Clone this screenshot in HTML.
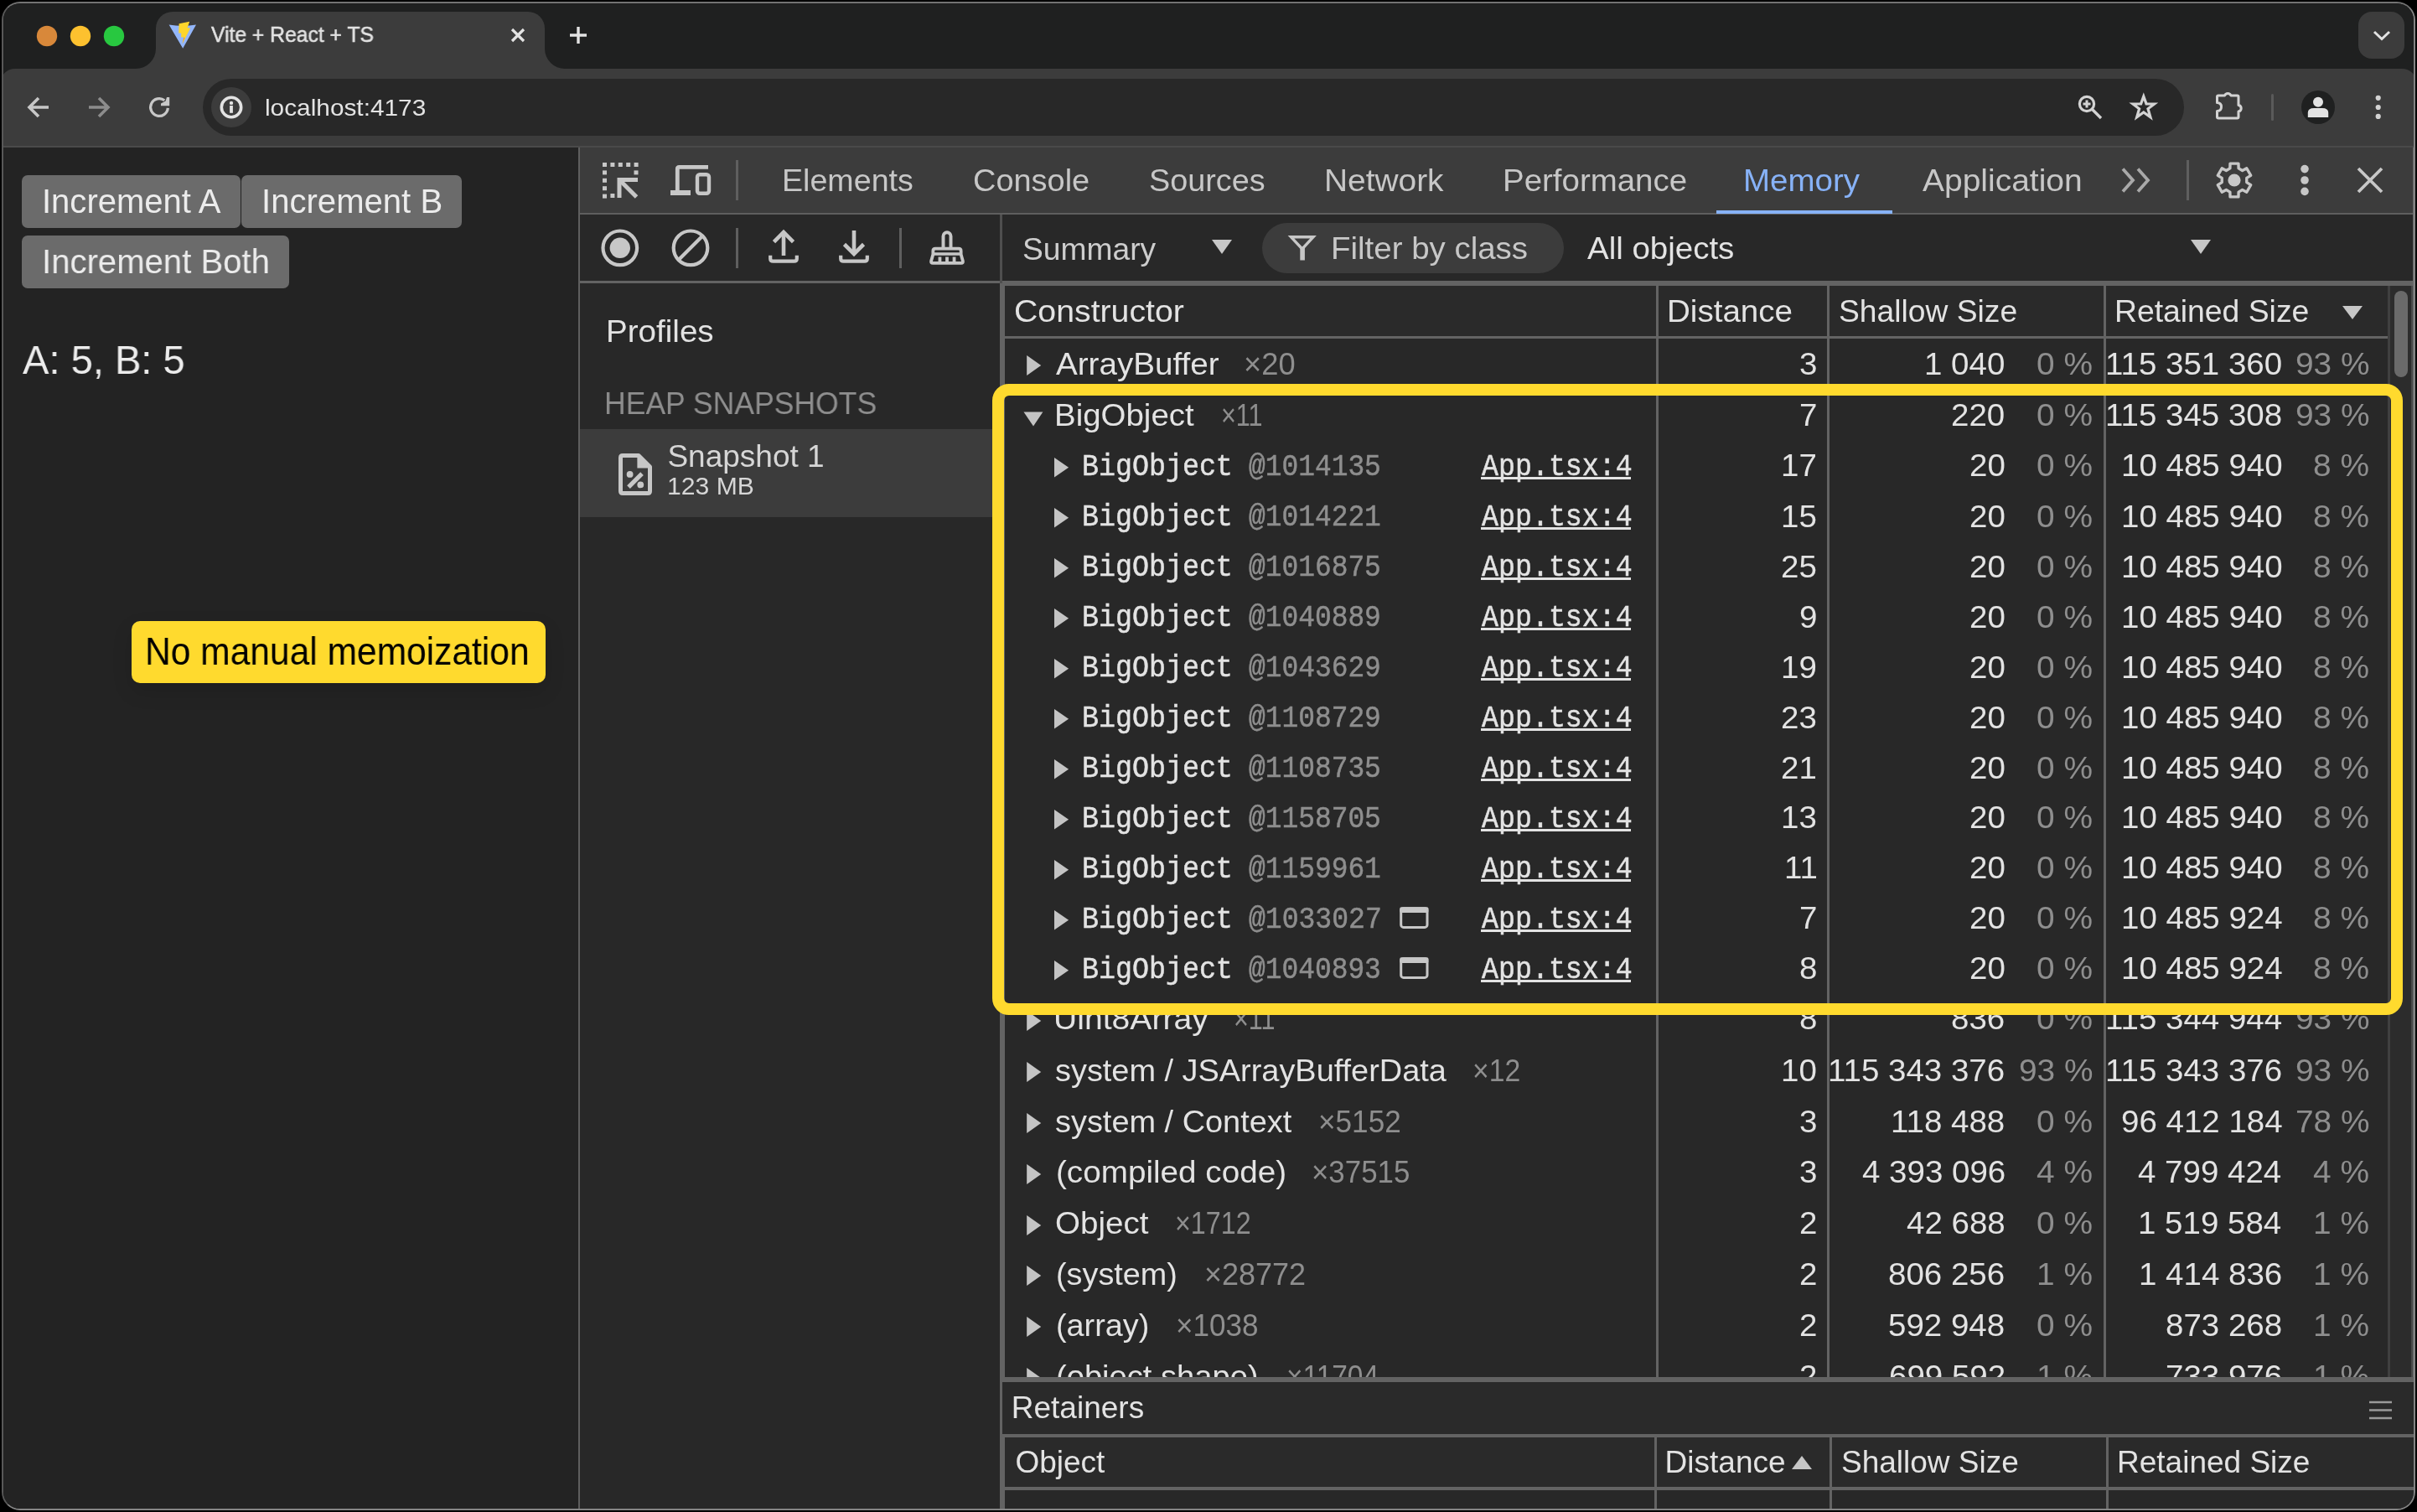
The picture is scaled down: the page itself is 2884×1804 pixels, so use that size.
<!DOCTYPE html>
<html><head><meta charset="utf-8"><title>DevTools Memory</title>
<style>
html,body{margin:0;padding:0;width:2884px;height:1804px;overflow:hidden;background:#000;}
#win{position:absolute;left:0;top:0;width:2884px;height:1804px;}
#win div,#win svg{position:absolute;}
</style></head><body><div id="win">
<div style="left:2px;top:2px;width:2880px;height:1800px;box-sizing:border-box;border:2px solid #585858;border-top-color:#727272;border-right-color:#838383;border-bottom-color:#858585;border-radius:22px;background:#1f2020"></div>
<div id="clip" style="left:0;top:0;width:2884px;height:1804px;clip-path:inset(4px round 20px);will-change:transform;">
<div style="left:0px;top:0px;width:2884px;height:82px;background:#1f2020;"></div>
<div style="left:186px;top:14px;width:464px;height:80px;background:#3c3c3c;border-radius:20px 20px 0 0"></div>
<svg class="i" style="left:162px;top:58px" width="24" height="24"><path d="M0 24 A24 24 0 0 0 24 0 V24 Z" fill="#3c3c3c"/></svg>
<svg class="i" style="left:650px;top:58px" width="24" height="24"><path d="M24 24 A24 24 0 0 1 0 0 V24 Z" fill="#3c3c3c"/></svg>
<div style="left:2814px;top:14px;width:55px;height:56px;background:#3c3c3c;border-radius:16px"></div>
<div style="left:0px;top:82px;width:2884px;height:92px;background:#3c3c3c;border-radius:18px 18px 0 0"></div>
<div style="left:0px;top:174px;width:2884px;height:2px;background:#4a4a4a;"></div>
<div style="left:242px;top:94px;width:2364px;height:68px;background:#282828;border-radius:34px"></div>
<div style="left:252px;top:104px;width:48px;height:48px;background:#3c3c3c;border-radius:24px"></div>
<div style="left:2746px;top:108px;width:40px;height:40px;background:#1f2020;border-radius:20px"></div>
<div style="left:2710px;top:112px;width:3px;height:32px;background:#5a5a5a;border-radius:2px"></div>
<svg style="left:40px;top:27px;" width="120" height="32" viewBox="0 0 120 32"><circle cx="16" cy="16" r="12.2" fill="#d8883a"/><circle cx="56" cy="16" r="12.2" fill="#fdc12f"/><circle cx="96" cy="16" r="12.2" fill="#28c840"/></svg>
<svg style="left:200px;top:24px;" width="36" height="36" viewBox="0 0 36 36"><path d="M1.6 5.6 Q18 8.2 34 5.6 L18.2 33.8 Z" fill="#93b6fa"/><path d="M13.6 4.2 L26.2 1.8 L23.6 9.2 L27.2 9.6 L17.6 28.2 L19.3 20.4 L16.2 20.4 L16.2 15.4 L13.2 15.4 Z" fill="#fed62b"/><path d="M19.3 20.4 L17.6 28.2 L20.5 21 Z" fill="#f28c1c" opacity="0.8"/></svg>
<svg style="left:608px;top:32px;" width="20" height="20" viewBox="0 0 20 20"><path d="M3 3 L17 17 M17 3 L3 17" stroke="#e3e3e3" stroke-width="3.2" stroke-linecap="butt"/></svg>
<svg style="left:678px;top:30px;" width="24" height="24" viewBox="0 0 24 24"><path d="M12 2 V22 M2 12 H22" stroke="#e3e3e3" stroke-width="3.4"/></svg>
<svg style="left:2829px;top:34px;" width="26" height="16" viewBox="0 0 26 16"><path d="M4 4 L13 12.5 L22 4" stroke="#e3e3e3" stroke-width="3" fill="none"/></svg>
<svg style="left:30px;top:112px;" width="32" height="32" viewBox="0 0 32 32"><path d="M28 16 H6 M16 5 L5 16 L16 27" stroke="#c7c7c7" stroke-width="3.6" fill="none"/></svg>
<svg style="left:102px;top:112px;" width="32" height="32" viewBox="0 0 32 32"><path d="M4 16 H26 M16 5 L27 16 L16 27" stroke="#8c8c8c" stroke-width="3.6" fill="none"/></svg>
<svg style="left:174px;top:112px;" width="32" height="32" viewBox="0 0 32 32"><path d="M26.31 16.9 A10.35 10.35 0 1 1 22.3 7.8" stroke="#c7c7c7" stroke-width="3.3" fill="none"/><path d="M25 4 H28.2 V14.2 H18 V11.4 L23.6 8.6 Z" fill="#c7c7c7"/></svg>
<svg style="left:260px;top:112px;" width="32" height="32" viewBox="0 0 32 32"><circle cx="16" cy="16" r="11.7" stroke="#e3e3e3" stroke-width="3.6" fill="none"/><circle cx="16" cy="10.9" r="2.2" fill="#e3e3e3"/><rect x="14.1" y="14" width="3.8" height="8.8" fill="#e3e3e3"/></svg>
<svg style="left:2476px;top:110px;" width="36" height="36" viewBox="0 0 36 36"><circle cx="14" cy="14" r="8.6" stroke="#d3d3d3" stroke-width="3.2" fill="none"/><path d="M14 9.5 V18.5 M9.5 14 H18.5" stroke="#d3d3d3" stroke-width="3"/><path d="M20.5 20.5 L31 31" stroke="#d3d3d3" stroke-width="3.4"/></svg>
<svg style="left:2540px;top:109px;" width="36" height="36" viewBox="0 0 36 36"><path d="M17.8 6 L21 14.9 L30.6 15 L23 20.8 L25.9 30.7 L17.8 24.9 L9.7 30.7 L12.6 20.8 L5 15 L14.6 14.9 Z" stroke="#d3d3d3" stroke-width="3.2" fill="none" stroke-linejoin="miter"/></svg>
<svg style="left:2640px;top:106px;" width="40" height="40" viewBox="0 0 40 40"><path d="M7 8 Q5.5 8 5.5 9.5 V16.5 Q10.5 16.5 10.5 21.5 Q10.5 26.5 5.5 26.5 V33.5 Q5.5 35 7 35 H29.5 Q31 35 31 33.5 V27 A3.8 3.8 0 0 0 31 19.5 V9.5 Q31 8 29.5 8 H22 A4 4 0 0 0 14.5 8 Z" stroke="#d3d3d3" stroke-width="3" fill="none" stroke-linejoin="round"/></svg>
<svg style="left:2746px;top:108px;" width="40" height="40" viewBox="0 0 40 40"><circle cx="20" cy="13.8" r="6" fill="#e3e3e3"/><path d="M7.8 32 V26.5 Q7.8 21 15 21 H25 Q32.2 21 32.2 26.5 V32 Z" fill="#e3e3e3"/></svg>
<svg style="left:2830px;top:110px;" width="16" height="36" viewBox="0 0 16 36"><circle cx="7.7" cy="6.8" r="3.1" fill="#d3d3d3"/><circle cx="7.7" cy="18" r="3.1" fill="#d3d3d3"/><circle cx="7.7" cy="28.9" r="3.1" fill="#d3d3d3"/></svg>
<div style="left:0px;top:176px;width:690px;height:1628px;background:#232323;"></div>
<div style="left:26px;top:209px;width:261px;height:63px;background:#6b6b6b;border-radius:7px"></div>
<div style="left:288px;top:209px;width:263px;height:63px;background:#6b6b6b;border-radius:7px"></div>
<div style="left:26px;top:281px;width:319px;height:63px;background:#6b6b6b;border-radius:7px"></div>
<div style="left:157px;top:741px;width:494px;height:74px;background:#ffda2e;border-radius:10px;box-shadow:0 10px 24px rgba(0,0,0,0.12)"></div>
<div style="left:690px;top:176px;width:2px;height:1628px;background:#5e5e5e;"></div>
<div style="left:692px;top:176px;width:2192px;height:79px;background:#3c3c3c;"></div>
<div style="left:692px;top:254px;width:2192px;height:2px;background:#5e5e5e;"></div>
<div style="left:2048px;top:251px;width:210px;height:4px;background:#87b2f7;"></div>
<div style="left:692px;top:256px;width:2192px;height:79px;background:#282828;"></div>
<div style="left:692px;top:335px;width:2192px;height:3px;background:#636363;"></div>
<div style="left:692px;top:338px;width:501px;height:1466px;background:#282828;"></div>
<div style="left:692px;top:512px;width:501px;height:105px;background:#3c3c3c;"></div>
<div style="left:1193px;top:256px;width:3px;height:82px;background:#4f4f4f;"></div>
<div style="left:1193px;top:338px;width:6px;height:1466px;background:#636363;"></div>
<div style="left:1199px;top:341px;width:1681px;height:60px;background:#2a2a2a;"></div>
<div style="left:1199px;top:338px;width:1681px;height:3px;background:#636363;"></div>
<div style="left:1199px;top:401px;width:1681px;height:3px;background:#636363;"></div>
<div style="left:1199px;top:404px;width:1681px;height:1239px;background:#282828;"></div>
<div style="left:1976px;top:341px;width:3px;height:1302px;background:#636363;"></div>
<div style="left:2180px;top:341px;width:3px;height:1302px;background:#636363;"></div>
<div style="left:2510px;top:341px;width:3px;height:1302px;background:#636363;"></div>
<div style="left:2851px;top:341px;width:29px;height:1302px;background:#2c2c2c;"></div>
<div style="left:2849px;top:341px;width:3px;height:1302px;background:#404040;"></div>
<div style="left:2877px;top:341px;width:2px;height:1302px;background:#4a4a4a;"></div>
<div style="left:2879px;top:176px;width:2px;height:1628px;background:#6c6c6c;"></div>
<div style="left:2857px;top:347px;width:16px;height:103px;background:#6a6a6a;border-radius:8px"></div>
<div style="left:1259.90px;top:415.55px;font-family:'Liberation Sans', sans-serif;font-size:37px;line-height:37px;white-space:pre;color:#e3e3e3;transform:scaleX(1.0435);transform-origin:0 0;">ArrayBuffer</div>
<div style="left:1484.16px;top:415.55px;font-family:'Liberation Sans', sans-serif;font-size:37px;line-height:37px;white-space:pre;color:#8e8e8e;transform:scaleX(0.9814);transform-origin:0 0;">×20</div>
<div style="left:2147.24px;top:415.55px;font-family:'Liberation Sans', sans-serif;font-size:37px;line-height:37px;white-space:pre;color:#e3e3e3;transform:scaleX(1.0400);transform-origin:0 0;">3</div>
<div style="left:2295.82px;top:415.55px;font-family:'Liberation Sans', sans-serif;font-size:37px;line-height:37px;white-space:pre;color:#e3e3e3;transform:scaleX(1.0400);transform-origin:0 0;">1 040</div>
<div style="left:2430.35px;top:415.55px;font-family:'Liberation Sans', sans-serif;font-size:37px;line-height:37px;white-space:pre;color:#8e8e8e;transform:scaleX(1.0500);transform-origin:0 0;">0 %</div>
<div style="left:2511.92px;top:415.55px;font-family:'Liberation Sans', sans-serif;font-size:37px;line-height:37px;white-space:pre;color:#e3e3e3;transform:scaleX(1.0400);transform-origin:0 0;">115 351 360</div>
<div style="left:2738.85px;top:415.55px;font-family:'Liberation Sans', sans-serif;font-size:37px;line-height:37px;white-space:pre;color:#8e8e8e;transform:scaleX(1.0500);transform-origin:0 0;">93 %</div>
<div style="left:1258.08px;top:476.75px;font-family:'Liberation Sans', sans-serif;font-size:37px;line-height:37px;white-space:pre;color:#e3e3e3;transform:scaleX(1.0392);transform-origin:0 0;">BigObject</div>
<div style="left:1456.52px;top:476.75px;font-family:'Liberation Sans', sans-serif;font-size:37px;line-height:37px;white-space:pre;color:#8e8e8e;transform:scaleX(0.8268);transform-origin:0 0;">×11</div>
<div style="left:2147.24px;top:476.75px;font-family:'Liberation Sans', sans-serif;font-size:37px;line-height:37px;white-space:pre;color:#e3e3e3;transform:scaleX(1.0400);transform-origin:0 0;">7</div>
<div style="left:2328.06px;top:476.75px;font-family:'Liberation Sans', sans-serif;font-size:37px;line-height:37px;white-space:pre;color:#e3e3e3;transform:scaleX(1.0400);transform-origin:0 0;">220</div>
<div style="left:2430.35px;top:476.75px;font-family:'Liberation Sans', sans-serif;font-size:37px;line-height:37px;white-space:pre;color:#8e8e8e;transform:scaleX(1.0500);transform-origin:0 0;">0 %</div>
<div style="left:2511.92px;top:476.75px;font-family:'Liberation Sans', sans-serif;font-size:37px;line-height:37px;white-space:pre;color:#e3e3e3;transform:scaleX(1.0400);transform-origin:0 0;">115 345 308</div>
<div style="left:2738.85px;top:476.75px;font-family:'Liberation Sans', sans-serif;font-size:37px;line-height:37px;white-space:pre;color:#8e8e8e;transform:scaleX(1.0500);transform-origin:0 0;">93 %</div>
<div style="left:1257.03px;top:1197.35px;font-family:'Liberation Sans', sans-serif;font-size:37px;line-height:37px;white-space:pre;color:#e3e3e3;transform:scaleX(1.0570);transform-origin:0 0;">Uint8Array</div>
<div style="left:1472.22px;top:1197.35px;font-family:'Liberation Sans', sans-serif;font-size:37px;line-height:37px;white-space:pre;color:#8e8e8e;transform:scaleX(0.8268);transform-origin:0 0;">×11</div>
<div style="left:2147.24px;top:1197.35px;font-family:'Liberation Sans', sans-serif;font-size:37px;line-height:37px;white-space:pre;color:#e3e3e3;transform:scaleX(1.0400);transform-origin:0 0;">8</div>
<div style="left:2328.06px;top:1197.35px;font-family:'Liberation Sans', sans-serif;font-size:37px;line-height:37px;white-space:pre;color:#e3e3e3;transform:scaleX(1.0400);transform-origin:0 0;">836</div>
<div style="left:2430.35px;top:1197.35px;font-family:'Liberation Sans', sans-serif;font-size:37px;line-height:37px;white-space:pre;color:#8e8e8e;transform:scaleX(1.0500);transform-origin:0 0;">0 %</div>
<div style="left:2511.92px;top:1197.35px;font-family:'Liberation Sans', sans-serif;font-size:37px;line-height:37px;white-space:pre;color:#e3e3e3;transform:scaleX(1.0400);transform-origin:0 0;">115 344 944</div>
<div style="left:2738.85px;top:1197.35px;font-family:'Liberation Sans', sans-serif;font-size:37px;line-height:37px;white-space:pre;color:#8e8e8e;transform:scaleX(1.0500);transform-origin:0 0;">93 %</div>
<div style="left:1258.98px;top:1258.55px;font-family:'Liberation Sans', sans-serif;font-size:37px;line-height:37px;white-space:pre;color:#e3e3e3;transform:scaleX(1.0242);transform-origin:0 0;">system / JSArrayBufferData</div>
<div style="left:1756.66px;top:1258.55px;font-family:'Liberation Sans', sans-serif;font-size:37px;line-height:37px;white-space:pre;color:#8e8e8e;transform:scaleX(0.9121);transform-origin:0 0;">×12</div>
<div style="left:2125.40px;top:1258.55px;font-family:'Liberation Sans', sans-serif;font-size:37px;line-height:37px;white-space:pre;color:#e3e3e3;transform:scaleX(1.0400);transform-origin:0 0;">10</div>
<div style="left:2181.42px;top:1258.55px;font-family:'Liberation Sans', sans-serif;font-size:37px;line-height:37px;white-space:pre;color:#e3e3e3;transform:scaleX(1.0400);transform-origin:0 0;">115 343 376</div>
<div style="left:2409.35px;top:1258.55px;font-family:'Liberation Sans', sans-serif;font-size:37px;line-height:37px;white-space:pre;color:#8e8e8e;transform:scaleX(1.0500);transform-origin:0 0;">93 %</div>
<div style="left:2511.92px;top:1258.55px;font-family:'Liberation Sans', sans-serif;font-size:37px;line-height:37px;white-space:pre;color:#e3e3e3;transform:scaleX(1.0400);transform-origin:0 0;">115 343 376</div>
<div style="left:2738.85px;top:1258.55px;font-family:'Liberation Sans', sans-serif;font-size:37px;line-height:37px;white-space:pre;color:#8e8e8e;transform:scaleX(1.0500);transform-origin:0 0;">93 %</div>
<div style="left:1259.28px;top:1319.55px;font-family:'Liberation Sans', sans-serif;font-size:37px;line-height:37px;white-space:pre;color:#e3e3e3;transform:scaleX(1.0244);transform-origin:0 0;">system / Context</div>
<div style="left:1572.65px;top:1319.55px;font-family:'Liberation Sans', sans-serif;font-size:37px;line-height:37px;white-space:pre;color:#8e8e8e;transform:scaleX(0.9505);transform-origin:0 0;">×5152</div>
<div style="left:2147.24px;top:1319.55px;font-family:'Liberation Sans', sans-serif;font-size:37px;line-height:37px;white-space:pre;color:#e3e3e3;transform:scaleX(1.0400);transform-origin:0 0;">3</div>
<div style="left:2256.30px;top:1319.55px;font-family:'Liberation Sans', sans-serif;font-size:37px;line-height:37px;white-space:pre;color:#e3e3e3;transform:scaleX(1.0400);transform-origin:0 0;">118 488</div>
<div style="left:2430.35px;top:1319.55px;font-family:'Liberation Sans', sans-serif;font-size:37px;line-height:37px;white-space:pre;color:#8e8e8e;transform:scaleX(1.0500);transform-origin:0 0;">0 %</div>
<div style="left:2530.64px;top:1319.55px;font-family:'Liberation Sans', sans-serif;font-size:37px;line-height:37px;white-space:pre;color:#e3e3e3;transform:scaleX(1.0400);transform-origin:0 0;">96 412 184</div>
<div style="left:2738.85px;top:1319.55px;font-family:'Liberation Sans', sans-serif;font-size:37px;line-height:37px;white-space:pre;color:#8e8e8e;transform:scaleX(1.0500);transform-origin:0 0;">78 %</div>
<div style="left:1259.91px;top:1380.45px;font-family:'Liberation Sans', sans-serif;font-size:37px;line-height:37px;white-space:pre;color:#e3e3e3;transform:scaleX(1.0448);transform-origin:0 0;">(compiled code)</div>
<div style="left:1565.07px;top:1380.45px;font-family:'Liberation Sans', sans-serif;font-size:37px;line-height:37px;white-space:pre;color:#8e8e8e;transform:scaleX(0.9425);transform-origin:0 0;">×37515</div>
<div style="left:2147.24px;top:1380.45px;font-family:'Liberation Sans', sans-serif;font-size:37px;line-height:37px;white-space:pre;color:#e3e3e3;transform:scaleX(1.0400);transform-origin:0 0;">3</div>
<div style="left:2221.98px;top:1380.45px;font-family:'Liberation Sans', sans-serif;font-size:37px;line-height:37px;white-space:pre;color:#e3e3e3;transform:scaleX(1.0400);transform-origin:0 0;">4 393 096</div>
<div style="left:2430.35px;top:1380.45px;font-family:'Liberation Sans', sans-serif;font-size:37px;line-height:37px;white-space:pre;color:#8e8e8e;transform:scaleX(1.0500);transform-origin:0 0;">4 %</div>
<div style="left:2551.44px;top:1380.45px;font-family:'Liberation Sans', sans-serif;font-size:37px;line-height:37px;white-space:pre;color:#e3e3e3;transform:scaleX(1.0400);transform-origin:0 0;">4 799 424</div>
<div style="left:2759.85px;top:1380.45px;font-family:'Liberation Sans', sans-serif;font-size:37px;line-height:37px;white-space:pre;color:#8e8e8e;transform:scaleX(1.0500);transform-origin:0 0;">4 %</div>
<div style="left:1259.26px;top:1441.35px;font-family:'Liberation Sans', sans-serif;font-size:37px;line-height:37px;white-space:pre;color:#e3e3e3;transform:scaleX(1.0415);transform-origin:0 0;">Object</div>
<div style="left:1402.08px;top:1441.35px;font-family:'Liberation Sans', sans-serif;font-size:37px;line-height:37px;white-space:pre;color:#8e8e8e;transform:scaleX(0.8717);transform-origin:0 0;">×1712</div>
<div style="left:2147.24px;top:1441.35px;font-family:'Liberation Sans', sans-serif;font-size:37px;line-height:37px;white-space:pre;color:#e3e3e3;transform:scaleX(1.0400);transform-origin:0 0;">2</div>
<div style="left:2275.02px;top:1441.35px;font-family:'Liberation Sans', sans-serif;font-size:37px;line-height:37px;white-space:pre;color:#e3e3e3;transform:scaleX(1.0400);transform-origin:0 0;">42 688</div>
<div style="left:2430.35px;top:1441.35px;font-family:'Liberation Sans', sans-serif;font-size:37px;line-height:37px;white-space:pre;color:#8e8e8e;transform:scaleX(1.0500);transform-origin:0 0;">0 %</div>
<div style="left:2551.44px;top:1441.35px;font-family:'Liberation Sans', sans-serif;font-size:37px;line-height:37px;white-space:pre;color:#e3e3e3;transform:scaleX(1.0400);transform-origin:0 0;">1 519 584</div>
<div style="left:2759.85px;top:1441.35px;font-family:'Liberation Sans', sans-serif;font-size:37px;line-height:37px;white-space:pre;color:#8e8e8e;transform:scaleX(1.0500);transform-origin:0 0;">1 %</div>
<div style="left:1259.96px;top:1502.05px;font-family:'Liberation Sans', sans-serif;font-size:37px;line-height:37px;white-space:pre;color:#e3e3e3;transform:scaleX(1.0217);transform-origin:0 0;">(system)</div>
<div style="left:1436.58px;top:1502.05px;font-family:'Liberation Sans', sans-serif;font-size:37px;line-height:37px;white-space:pre;color:#8e8e8e;transform:scaleX(0.9725);transform-origin:0 0;">×28772</div>
<div style="left:2147.24px;top:1502.05px;font-family:'Liberation Sans', sans-serif;font-size:37px;line-height:37px;white-space:pre;color:#e3e3e3;transform:scaleX(1.0400);transform-origin:0 0;">2</div>
<div style="left:2253.18px;top:1502.05px;font-family:'Liberation Sans', sans-serif;font-size:37px;line-height:37px;white-space:pre;color:#e3e3e3;transform:scaleX(1.0400);transform-origin:0 0;">806 256</div>
<div style="left:2430.35px;top:1502.05px;font-family:'Liberation Sans', sans-serif;font-size:37px;line-height:37px;white-space:pre;color:#8e8e8e;transform:scaleX(1.0500);transform-origin:0 0;">1 %</div>
<div style="left:2552.48px;top:1502.05px;font-family:'Liberation Sans', sans-serif;font-size:37px;line-height:37px;white-space:pre;color:#e3e3e3;transform:scaleX(1.0400);transform-origin:0 0;">1 414 836</div>
<div style="left:2759.85px;top:1502.05px;font-family:'Liberation Sans', sans-serif;font-size:37px;line-height:37px;white-space:pre;color:#8e8e8e;transform:scaleX(1.0500);transform-origin:0 0;">1 %</div>
<div style="left:1259.96px;top:1562.75px;font-family:'Liberation Sans', sans-serif;font-size:37px;line-height:37px;white-space:pre;color:#e3e3e3;transform:scaleX(1.0210);transform-origin:0 0;">(array)</div>
<div style="left:1402.66px;top:1562.75px;font-family:'Liberation Sans', sans-serif;font-size:37px;line-height:37px;white-space:pre;color:#8e8e8e;transform:scaleX(0.9480);transform-origin:0 0;">×1038</div>
<div style="left:2147.24px;top:1562.75px;font-family:'Liberation Sans', sans-serif;font-size:37px;line-height:37px;white-space:pre;color:#e3e3e3;transform:scaleX(1.0400);transform-origin:0 0;">2</div>
<div style="left:2253.18px;top:1562.75px;font-family:'Liberation Sans', sans-serif;font-size:37px;line-height:37px;white-space:pre;color:#e3e3e3;transform:scaleX(1.0400);transform-origin:0 0;">592 948</div>
<div style="left:2430.35px;top:1562.75px;font-family:'Liberation Sans', sans-serif;font-size:37px;line-height:37px;white-space:pre;color:#8e8e8e;transform:scaleX(1.0500);transform-origin:0 0;">0 %</div>
<div style="left:2583.68px;top:1562.75px;font-family:'Liberation Sans', sans-serif;font-size:37px;line-height:37px;white-space:pre;color:#e3e3e3;transform:scaleX(1.0400);transform-origin:0 0;">873 268</div>
<div style="left:2759.85px;top:1562.75px;font-family:'Liberation Sans', sans-serif;font-size:37px;line-height:37px;white-space:pre;color:#8e8e8e;transform:scaleX(1.0500);transform-origin:0 0;">1 %</div>
<div style="left:1259.94px;top:1623.55px;font-family:'Liberation Sans', sans-serif;font-size:37px;line-height:37px;white-space:pre;color:#e3e3e3;transform:scaleX(1.0303);transform-origin:0 0;">(object shape)</div>
<div style="left:1534.89px;top:1623.55px;font-family:'Liberation Sans', sans-serif;font-size:37px;line-height:37px;white-space:pre;color:#8e8e8e;transform:scaleX(0.9042);transform-origin:0 0;">×11704</div>
<div style="left:2147.24px;top:1623.55px;font-family:'Liberation Sans', sans-serif;font-size:37px;line-height:37px;white-space:pre;color:#e3e3e3;transform:scaleX(1.0400);transform-origin:0 0;">2</div>
<div style="left:2254.22px;top:1623.55px;font-family:'Liberation Sans', sans-serif;font-size:37px;line-height:37px;white-space:pre;color:#e3e3e3;transform:scaleX(1.0400);transform-origin:0 0;">699 592</div>
<div style="left:2430.35px;top:1623.55px;font-family:'Liberation Sans', sans-serif;font-size:37px;line-height:37px;white-space:pre;color:#8e8e8e;transform:scaleX(1.0500);transform-origin:0 0;">1 %</div>
<div style="left:2583.68px;top:1623.55px;font-family:'Liberation Sans', sans-serif;font-size:37px;line-height:37px;white-space:pre;color:#e3e3e3;transform:scaleX(1.0400);transform-origin:0 0;">733 976</div>
<div style="left:2759.85px;top:1623.55px;font-family:'Liberation Sans', sans-serif;font-size:37px;line-height:37px;white-space:pre;color:#8e8e8e;transform:scaleX(1.0500);transform-origin:0 0;">1 %</div>
<div style="left:1290.90px;top:538.88px;font-family:'Liberation Mono', monospace;font-size:37px;line-height:37px;white-space:pre;color:#e3e3e3;transform:scaleX(0.9000);transform-origin:0 0;-webkit-text-stroke:0.5px #e3e3e3;">BigObject</div>
<div style="left:1489.60px;top:538.88px;font-family:'Liberation Mono', monospace;font-size:37px;line-height:37px;white-space:pre;color:#8e8e8e;transform:scaleX(0.8886);transform-origin:0 0;-webkit-text-stroke:0.5px #8e8e8e;">@1014135</div>
<div style="left:1767.60px;top:538.88px;font-family:'Liberation Mono', monospace;font-size:37px;line-height:37px;white-space:pre;color:#e3e3e3;transform:scaleX(0.8995);transform-origin:0 0;-webkit-text-stroke:0.5px #e3e3e3;">App.tsx:4</div>
<div style="left:2125.40px;top:537.05px;font-family:'Liberation Sans', sans-serif;font-size:37px;line-height:37px;white-space:pre;color:#e3e3e3;transform:scaleX(1.0400);transform-origin:0 0;">17</div>
<div style="left:2349.90px;top:537.05px;font-family:'Liberation Sans', sans-serif;font-size:37px;line-height:37px;white-space:pre;color:#e3e3e3;transform:scaleX(1.0400);transform-origin:0 0;">20</div>
<div style="left:2430.35px;top:537.05px;font-family:'Liberation Sans', sans-serif;font-size:37px;line-height:37px;white-space:pre;color:#8e8e8e;transform:scaleX(1.0500);transform-origin:0 0;">0 %</div>
<div style="left:2530.64px;top:537.05px;font-family:'Liberation Sans', sans-serif;font-size:37px;line-height:37px;white-space:pre;color:#e3e3e3;transform:scaleX(1.0400);transform-origin:0 0;">10 485 940</div>
<div style="left:2759.85px;top:537.05px;font-family:'Liberation Sans', sans-serif;font-size:37px;line-height:37px;white-space:pre;color:#8e8e8e;transform:scaleX(1.0500);transform-origin:0 0;">8 %</div>
<div style="left:1290.90px;top:599.38px;font-family:'Liberation Mono', monospace;font-size:37px;line-height:37px;white-space:pre;color:#e3e3e3;transform:scaleX(0.9000);transform-origin:0 0;-webkit-text-stroke:0.5px #e3e3e3;">BigObject</div>
<div style="left:1489.60px;top:599.38px;font-family:'Liberation Mono', monospace;font-size:37px;line-height:37px;white-space:pre;color:#8e8e8e;transform:scaleX(0.8886);transform-origin:0 0;-webkit-text-stroke:0.5px #8e8e8e;">@1014221</div>
<div style="left:1767.60px;top:599.38px;font-family:'Liberation Mono', monospace;font-size:37px;line-height:37px;white-space:pre;color:#e3e3e3;transform:scaleX(0.8995);transform-origin:0 0;-webkit-text-stroke:0.5px #e3e3e3;">App.tsx:4</div>
<div style="left:2125.40px;top:597.55px;font-family:'Liberation Sans', sans-serif;font-size:37px;line-height:37px;white-space:pre;color:#e3e3e3;transform:scaleX(1.0400);transform-origin:0 0;">15</div>
<div style="left:2349.90px;top:597.55px;font-family:'Liberation Sans', sans-serif;font-size:37px;line-height:37px;white-space:pre;color:#e3e3e3;transform:scaleX(1.0400);transform-origin:0 0;">20</div>
<div style="left:2430.35px;top:597.55px;font-family:'Liberation Sans', sans-serif;font-size:37px;line-height:37px;white-space:pre;color:#8e8e8e;transform:scaleX(1.0500);transform-origin:0 0;">0 %</div>
<div style="left:2530.64px;top:597.55px;font-family:'Liberation Sans', sans-serif;font-size:37px;line-height:37px;white-space:pre;color:#e3e3e3;transform:scaleX(1.0400);transform-origin:0 0;">10 485 940</div>
<div style="left:2759.85px;top:597.55px;font-family:'Liberation Sans', sans-serif;font-size:37px;line-height:37px;white-space:pre;color:#8e8e8e;transform:scaleX(1.0500);transform-origin:0 0;">8 %</div>
<div style="left:1290.90px;top:659.38px;font-family:'Liberation Mono', monospace;font-size:37px;line-height:37px;white-space:pre;color:#e3e3e3;transform:scaleX(0.9000);transform-origin:0 0;-webkit-text-stroke:0.5px #e3e3e3;">BigObject</div>
<div style="left:1489.60px;top:659.38px;font-family:'Liberation Mono', monospace;font-size:37px;line-height:37px;white-space:pre;color:#8e8e8e;transform:scaleX(0.8886);transform-origin:0 0;-webkit-text-stroke:0.5px #8e8e8e;">@1016875</div>
<div style="left:1767.60px;top:659.38px;font-family:'Liberation Mono', monospace;font-size:37px;line-height:37px;white-space:pre;color:#e3e3e3;transform:scaleX(0.8995);transform-origin:0 0;-webkit-text-stroke:0.5px #e3e3e3;">App.tsx:4</div>
<div style="left:2125.40px;top:657.55px;font-family:'Liberation Sans', sans-serif;font-size:37px;line-height:37px;white-space:pre;color:#e3e3e3;transform:scaleX(1.0400);transform-origin:0 0;">25</div>
<div style="left:2349.90px;top:657.55px;font-family:'Liberation Sans', sans-serif;font-size:37px;line-height:37px;white-space:pre;color:#e3e3e3;transform:scaleX(1.0400);transform-origin:0 0;">20</div>
<div style="left:2430.35px;top:657.55px;font-family:'Liberation Sans', sans-serif;font-size:37px;line-height:37px;white-space:pre;color:#8e8e8e;transform:scaleX(1.0500);transform-origin:0 0;">0 %</div>
<div style="left:2530.64px;top:657.55px;font-family:'Liberation Sans', sans-serif;font-size:37px;line-height:37px;white-space:pre;color:#e3e3e3;transform:scaleX(1.0400);transform-origin:0 0;">10 485 940</div>
<div style="left:2759.85px;top:657.55px;font-family:'Liberation Sans', sans-serif;font-size:37px;line-height:37px;white-space:pre;color:#8e8e8e;transform:scaleX(1.0500);transform-origin:0 0;">8 %</div>
<div style="left:1290.90px;top:719.38px;font-family:'Liberation Mono', monospace;font-size:37px;line-height:37px;white-space:pre;color:#e3e3e3;transform:scaleX(0.9000);transform-origin:0 0;-webkit-text-stroke:0.5px #e3e3e3;">BigObject</div>
<div style="left:1489.60px;top:719.38px;font-family:'Liberation Mono', monospace;font-size:37px;line-height:37px;white-space:pre;color:#8e8e8e;transform:scaleX(0.8886);transform-origin:0 0;-webkit-text-stroke:0.5px #8e8e8e;">@1040889</div>
<div style="left:1767.60px;top:719.38px;font-family:'Liberation Mono', monospace;font-size:37px;line-height:37px;white-space:pre;color:#e3e3e3;transform:scaleX(0.8995);transform-origin:0 0;-webkit-text-stroke:0.5px #e3e3e3;">App.tsx:4</div>
<div style="left:2147.24px;top:717.55px;font-family:'Liberation Sans', sans-serif;font-size:37px;line-height:37px;white-space:pre;color:#e3e3e3;transform:scaleX(1.0400);transform-origin:0 0;">9</div>
<div style="left:2349.90px;top:717.55px;font-family:'Liberation Sans', sans-serif;font-size:37px;line-height:37px;white-space:pre;color:#e3e3e3;transform:scaleX(1.0400);transform-origin:0 0;">20</div>
<div style="left:2430.35px;top:717.55px;font-family:'Liberation Sans', sans-serif;font-size:37px;line-height:37px;white-space:pre;color:#8e8e8e;transform:scaleX(1.0500);transform-origin:0 0;">0 %</div>
<div style="left:2530.64px;top:717.55px;font-family:'Liberation Sans', sans-serif;font-size:37px;line-height:37px;white-space:pre;color:#e3e3e3;transform:scaleX(1.0400);transform-origin:0 0;">10 485 940</div>
<div style="left:2759.85px;top:717.55px;font-family:'Liberation Sans', sans-serif;font-size:37px;line-height:37px;white-space:pre;color:#8e8e8e;transform:scaleX(1.0500);transform-origin:0 0;">8 %</div>
<div style="left:1290.90px;top:779.38px;font-family:'Liberation Mono', monospace;font-size:37px;line-height:37px;white-space:pre;color:#e3e3e3;transform:scaleX(0.9000);transform-origin:0 0;-webkit-text-stroke:0.5px #e3e3e3;">BigObject</div>
<div style="left:1489.60px;top:779.38px;font-family:'Liberation Mono', monospace;font-size:37px;line-height:37px;white-space:pre;color:#8e8e8e;transform:scaleX(0.8886);transform-origin:0 0;-webkit-text-stroke:0.5px #8e8e8e;">@1043629</div>
<div style="left:1767.60px;top:779.38px;font-family:'Liberation Mono', monospace;font-size:37px;line-height:37px;white-space:pre;color:#e3e3e3;transform:scaleX(0.8995);transform-origin:0 0;-webkit-text-stroke:0.5px #e3e3e3;">App.tsx:4</div>
<div style="left:2125.40px;top:777.55px;font-family:'Liberation Sans', sans-serif;font-size:37px;line-height:37px;white-space:pre;color:#e3e3e3;transform:scaleX(1.0400);transform-origin:0 0;">19</div>
<div style="left:2349.90px;top:777.55px;font-family:'Liberation Sans', sans-serif;font-size:37px;line-height:37px;white-space:pre;color:#e3e3e3;transform:scaleX(1.0400);transform-origin:0 0;">20</div>
<div style="left:2430.35px;top:777.55px;font-family:'Liberation Sans', sans-serif;font-size:37px;line-height:37px;white-space:pre;color:#8e8e8e;transform:scaleX(1.0500);transform-origin:0 0;">0 %</div>
<div style="left:2530.64px;top:777.55px;font-family:'Liberation Sans', sans-serif;font-size:37px;line-height:37px;white-space:pre;color:#e3e3e3;transform:scaleX(1.0400);transform-origin:0 0;">10 485 940</div>
<div style="left:2759.85px;top:777.55px;font-family:'Liberation Sans', sans-serif;font-size:37px;line-height:37px;white-space:pre;color:#8e8e8e;transform:scaleX(1.0500);transform-origin:0 0;">8 %</div>
<div style="left:1290.90px;top:839.38px;font-family:'Liberation Mono', monospace;font-size:37px;line-height:37px;white-space:pre;color:#e3e3e3;transform:scaleX(0.9000);transform-origin:0 0;-webkit-text-stroke:0.5px #e3e3e3;">BigObject</div>
<div style="left:1489.60px;top:839.38px;font-family:'Liberation Mono', monospace;font-size:37px;line-height:37px;white-space:pre;color:#8e8e8e;transform:scaleX(0.8886);transform-origin:0 0;-webkit-text-stroke:0.5px #8e8e8e;">@1108729</div>
<div style="left:1767.60px;top:839.38px;font-family:'Liberation Mono', monospace;font-size:37px;line-height:37px;white-space:pre;color:#e3e3e3;transform:scaleX(0.8995);transform-origin:0 0;-webkit-text-stroke:0.5px #e3e3e3;">App.tsx:4</div>
<div style="left:2125.40px;top:837.55px;font-family:'Liberation Sans', sans-serif;font-size:37px;line-height:37px;white-space:pre;color:#e3e3e3;transform:scaleX(1.0400);transform-origin:0 0;">23</div>
<div style="left:2349.90px;top:837.55px;font-family:'Liberation Sans', sans-serif;font-size:37px;line-height:37px;white-space:pre;color:#e3e3e3;transform:scaleX(1.0400);transform-origin:0 0;">20</div>
<div style="left:2430.35px;top:837.55px;font-family:'Liberation Sans', sans-serif;font-size:37px;line-height:37px;white-space:pre;color:#8e8e8e;transform:scaleX(1.0500);transform-origin:0 0;">0 %</div>
<div style="left:2530.64px;top:837.55px;font-family:'Liberation Sans', sans-serif;font-size:37px;line-height:37px;white-space:pre;color:#e3e3e3;transform:scaleX(1.0400);transform-origin:0 0;">10 485 940</div>
<div style="left:2759.85px;top:837.55px;font-family:'Liberation Sans', sans-serif;font-size:37px;line-height:37px;white-space:pre;color:#8e8e8e;transform:scaleX(1.0500);transform-origin:0 0;">8 %</div>
<div style="left:1290.90px;top:899.38px;font-family:'Liberation Mono', monospace;font-size:37px;line-height:37px;white-space:pre;color:#e3e3e3;transform:scaleX(0.9000);transform-origin:0 0;-webkit-text-stroke:0.5px #e3e3e3;">BigObject</div>
<div style="left:1489.60px;top:899.38px;font-family:'Liberation Mono', monospace;font-size:37px;line-height:37px;white-space:pre;color:#8e8e8e;transform:scaleX(0.8886);transform-origin:0 0;-webkit-text-stroke:0.5px #8e8e8e;">@1108735</div>
<div style="left:1767.60px;top:899.38px;font-family:'Liberation Mono', monospace;font-size:37px;line-height:37px;white-space:pre;color:#e3e3e3;transform:scaleX(0.8995);transform-origin:0 0;-webkit-text-stroke:0.5px #e3e3e3;">App.tsx:4</div>
<div style="left:2125.40px;top:897.55px;font-family:'Liberation Sans', sans-serif;font-size:37px;line-height:37px;white-space:pre;color:#e3e3e3;transform:scaleX(1.0400);transform-origin:0 0;">21</div>
<div style="left:2349.90px;top:897.55px;font-family:'Liberation Sans', sans-serif;font-size:37px;line-height:37px;white-space:pre;color:#e3e3e3;transform:scaleX(1.0400);transform-origin:0 0;">20</div>
<div style="left:2430.35px;top:897.55px;font-family:'Liberation Sans', sans-serif;font-size:37px;line-height:37px;white-space:pre;color:#8e8e8e;transform:scaleX(1.0500);transform-origin:0 0;">0 %</div>
<div style="left:2530.64px;top:897.55px;font-family:'Liberation Sans', sans-serif;font-size:37px;line-height:37px;white-space:pre;color:#e3e3e3;transform:scaleX(1.0400);transform-origin:0 0;">10 485 940</div>
<div style="left:2759.85px;top:897.55px;font-family:'Liberation Sans', sans-serif;font-size:37px;line-height:37px;white-space:pre;color:#8e8e8e;transform:scaleX(1.0500);transform-origin:0 0;">8 %</div>
<div style="left:1290.90px;top:959.18px;font-family:'Liberation Mono', monospace;font-size:37px;line-height:37px;white-space:pre;color:#e3e3e3;transform:scaleX(0.9000);transform-origin:0 0;-webkit-text-stroke:0.5px #e3e3e3;">BigObject</div>
<div style="left:1489.60px;top:959.18px;font-family:'Liberation Mono', monospace;font-size:37px;line-height:37px;white-space:pre;color:#8e8e8e;transform:scaleX(0.8886);transform-origin:0 0;-webkit-text-stroke:0.5px #8e8e8e;">@1158705</div>
<div style="left:1767.60px;top:959.18px;font-family:'Liberation Mono', monospace;font-size:37px;line-height:37px;white-space:pre;color:#e3e3e3;transform:scaleX(0.8995);transform-origin:0 0;-webkit-text-stroke:0.5px #e3e3e3;">App.tsx:4</div>
<div style="left:2125.40px;top:957.35px;font-family:'Liberation Sans', sans-serif;font-size:37px;line-height:37px;white-space:pre;color:#e3e3e3;transform:scaleX(1.0400);transform-origin:0 0;">13</div>
<div style="left:2349.90px;top:957.35px;font-family:'Liberation Sans', sans-serif;font-size:37px;line-height:37px;white-space:pre;color:#e3e3e3;transform:scaleX(1.0400);transform-origin:0 0;">20</div>
<div style="left:2430.35px;top:957.35px;font-family:'Liberation Sans', sans-serif;font-size:37px;line-height:37px;white-space:pre;color:#8e8e8e;transform:scaleX(1.0500);transform-origin:0 0;">0 %</div>
<div style="left:2530.64px;top:957.35px;font-family:'Liberation Sans', sans-serif;font-size:37px;line-height:37px;white-space:pre;color:#e3e3e3;transform:scaleX(1.0400);transform-origin:0 0;">10 485 940</div>
<div style="left:2759.85px;top:957.35px;font-family:'Liberation Sans', sans-serif;font-size:37px;line-height:37px;white-space:pre;color:#8e8e8e;transform:scaleX(1.0500);transform-origin:0 0;">8 %</div>
<div style="left:1290.90px;top:1018.98px;font-family:'Liberation Mono', monospace;font-size:37px;line-height:37px;white-space:pre;color:#e3e3e3;transform:scaleX(0.9000);transform-origin:0 0;-webkit-text-stroke:0.5px #e3e3e3;">BigObject</div>
<div style="left:1489.60px;top:1018.98px;font-family:'Liberation Mono', monospace;font-size:37px;line-height:37px;white-space:pre;color:#8e8e8e;transform:scaleX(0.8886);transform-origin:0 0;-webkit-text-stroke:0.5px #8e8e8e;">@1159961</div>
<div style="left:1767.60px;top:1018.98px;font-family:'Liberation Mono', monospace;font-size:37px;line-height:37px;white-space:pre;color:#e3e3e3;transform:scaleX(0.8995);transform-origin:0 0;-webkit-text-stroke:0.5px #e3e3e3;">App.tsx:4</div>
<div style="left:2128.52px;top:1017.15px;font-family:'Liberation Sans', sans-serif;font-size:37px;line-height:37px;white-space:pre;color:#e3e3e3;transform:scaleX(1.0400);transform-origin:0 0;">11</div>
<div style="left:2349.90px;top:1017.15px;font-family:'Liberation Sans', sans-serif;font-size:37px;line-height:37px;white-space:pre;color:#e3e3e3;transform:scaleX(1.0400);transform-origin:0 0;">20</div>
<div style="left:2430.35px;top:1017.15px;font-family:'Liberation Sans', sans-serif;font-size:37px;line-height:37px;white-space:pre;color:#8e8e8e;transform:scaleX(1.0500);transform-origin:0 0;">0 %</div>
<div style="left:2530.64px;top:1017.15px;font-family:'Liberation Sans', sans-serif;font-size:37px;line-height:37px;white-space:pre;color:#e3e3e3;transform:scaleX(1.0400);transform-origin:0 0;">10 485 940</div>
<div style="left:2759.85px;top:1017.15px;font-family:'Liberation Sans', sans-serif;font-size:37px;line-height:37px;white-space:pre;color:#8e8e8e;transform:scaleX(1.0500);transform-origin:0 0;">8 %</div>
<div style="left:1290.90px;top:1079.08px;font-family:'Liberation Mono', monospace;font-size:37px;line-height:37px;white-space:pre;color:#e3e3e3;transform:scaleX(0.9000);transform-origin:0 0;-webkit-text-stroke:0.5px #e3e3e3;">BigObject</div>
<div style="left:1489.60px;top:1079.08px;font-family:'Liberation Mono', monospace;font-size:37px;line-height:37px;white-space:pre;color:#8e8e8e;transform:scaleX(0.8937);transform-origin:0 0;-webkit-text-stroke:0.5px #8e8e8e;">@1033027</div>
<div style="left:1767.60px;top:1079.08px;font-family:'Liberation Mono', monospace;font-size:37px;line-height:37px;white-space:pre;color:#e3e3e3;transform:scaleX(0.8995);transform-origin:0 0;-webkit-text-stroke:0.5px #e3e3e3;">App.tsx:4</div>
<div style="left:2147.24px;top:1077.25px;font-family:'Liberation Sans', sans-serif;font-size:37px;line-height:37px;white-space:pre;color:#e3e3e3;transform:scaleX(1.0400);transform-origin:0 0;">7</div>
<div style="left:2349.90px;top:1077.25px;font-family:'Liberation Sans', sans-serif;font-size:37px;line-height:37px;white-space:pre;color:#e3e3e3;transform:scaleX(1.0400);transform-origin:0 0;">20</div>
<div style="left:2430.35px;top:1077.25px;font-family:'Liberation Sans', sans-serif;font-size:37px;line-height:37px;white-space:pre;color:#8e8e8e;transform:scaleX(1.0500);transform-origin:0 0;">0 %</div>
<div style="left:2530.64px;top:1077.25px;font-family:'Liberation Sans', sans-serif;font-size:37px;line-height:37px;white-space:pre;color:#e3e3e3;transform:scaleX(1.0400);transform-origin:0 0;">10 485 924</div>
<div style="left:2759.85px;top:1077.25px;font-family:'Liberation Sans', sans-serif;font-size:37px;line-height:37px;white-space:pre;color:#8e8e8e;transform:scaleX(1.0500);transform-origin:0 0;">8 %</div>
<div style="left:1290.90px;top:1138.98px;font-family:'Liberation Mono', monospace;font-size:37px;line-height:37px;white-space:pre;color:#e3e3e3;transform:scaleX(0.9000);transform-origin:0 0;-webkit-text-stroke:0.5px #e3e3e3;">BigObject</div>
<div style="left:1489.60px;top:1138.98px;font-family:'Liberation Mono', monospace;font-size:37px;line-height:37px;white-space:pre;color:#8e8e8e;transform:scaleX(0.8886);transform-origin:0 0;-webkit-text-stroke:0.5px #8e8e8e;">@1040893</div>
<div style="left:1767.60px;top:1138.98px;font-family:'Liberation Mono', monospace;font-size:37px;line-height:37px;white-space:pre;color:#e3e3e3;transform:scaleX(0.8995);transform-origin:0 0;-webkit-text-stroke:0.5px #e3e3e3;">App.tsx:4</div>
<div style="left:2147.24px;top:1137.15px;font-family:'Liberation Sans', sans-serif;font-size:37px;line-height:37px;white-space:pre;color:#e3e3e3;transform:scaleX(1.0400);transform-origin:0 0;">8</div>
<div style="left:2349.90px;top:1137.15px;font-family:'Liberation Sans', sans-serif;font-size:37px;line-height:37px;white-space:pre;color:#e3e3e3;transform:scaleX(1.0400);transform-origin:0 0;">20</div>
<div style="left:2430.35px;top:1137.15px;font-family:'Liberation Sans', sans-serif;font-size:37px;line-height:37px;white-space:pre;color:#8e8e8e;transform:scaleX(1.0500);transform-origin:0 0;">0 %</div>
<div style="left:2530.64px;top:1137.15px;font-family:'Liberation Sans', sans-serif;font-size:37px;line-height:37px;white-space:pre;color:#e3e3e3;transform:scaleX(1.0400);transform-origin:0 0;">10 485 924</div>
<div style="left:2759.85px;top:1137.15px;font-family:'Liberation Sans', sans-serif;font-size:37px;line-height:37px;white-space:pre;color:#8e8e8e;transform:scaleX(1.0500);transform-origin:0 0;">8 %</div>
<svg style="left:1225px;top:424px;" width="18" height="24" viewBox="0 0 18 24"><path d="M0.2 0 L17.2 12 L0.2 24 Z" fill="#c4c4c4"/></svg>
<svg style="left:1225px;top:1206px;" width="18" height="24" viewBox="0 0 18 24"><path d="M0.2 0 L17.2 12 L0.2 24 Z" fill="#c4c4c4"/></svg>
<svg style="left:1225px;top:1267px;" width="18" height="24" viewBox="0 0 18 24"><path d="M0.2 0 L17.2 12 L0.2 24 Z" fill="#c4c4c4"/></svg>
<svg style="left:1225px;top:1328px;" width="18" height="24" viewBox="0 0 18 24"><path d="M0.2 0 L17.2 12 L0.2 24 Z" fill="#c4c4c4"/></svg>
<svg style="left:1225px;top:1389px;" width="18" height="24" viewBox="0 0 18 24"><path d="M0.2 0 L17.2 12 L0.2 24 Z" fill="#c4c4c4"/></svg>
<svg style="left:1225px;top:1450px;" width="18" height="24" viewBox="0 0 18 24"><path d="M0.2 0 L17.2 12 L0.2 24 Z" fill="#c4c4c4"/></svg>
<svg style="left:1225px;top:1510px;" width="18" height="24" viewBox="0 0 18 24"><path d="M0.2 0 L17.2 12 L0.2 24 Z" fill="#c4c4c4"/></svg>
<svg style="left:1225px;top:1571px;" width="18" height="24" viewBox="0 0 18 24"><path d="M0.2 0 L17.2 12 L0.2 24 Z" fill="#c4c4c4"/></svg>
<svg style="left:1225px;top:1632px;" width="18" height="24" viewBox="0 0 18 24"><path d="M0.2 0 L17.2 12 L0.2 24 Z" fill="#c4c4c4"/></svg>
<svg style="left:1221px;top:491px;" width="24" height="18" viewBox="0 0 24 18"><path d="M0.5 0.4 H23.4 L12 17.4 Z" fill="#c4c4c4"/></svg>
<svg style="left:1258px;top:546px;" width="18" height="24" viewBox="0 0 18 24"><path d="M0 0 L17.1 11.75 L0 23.5 Z" fill="#c4c4c4"/></svg>
<div style="left:1767.4px;top:568.8px;width:178.4px;height:3px;background:#e3e3e3;"></div>
<svg style="left:1258px;top:606px;" width="18" height="24" viewBox="0 0 18 24"><path d="M0 0 L17.1 11.75 L0 23.5 Z" fill="#c4c4c4"/></svg>
<div style="left:1767.4px;top:629.3px;width:178.4px;height:3px;background:#e3e3e3;"></div>
<svg style="left:1258px;top:666px;" width="18" height="24" viewBox="0 0 18 24"><path d="M0 0 L17.1 11.75 L0 23.5 Z" fill="#c4c4c4"/></svg>
<div style="left:1767.4px;top:689.3px;width:178.4px;height:3px;background:#e3e3e3;"></div>
<svg style="left:1258px;top:726px;" width="18" height="24" viewBox="0 0 18 24"><path d="M0 0 L17.1 11.75 L0 23.5 Z" fill="#c4c4c4"/></svg>
<div style="left:1767.4px;top:749.3px;width:178.4px;height:3px;background:#e3e3e3;"></div>
<svg style="left:1258px;top:786px;" width="18" height="24" viewBox="0 0 18 24"><path d="M0 0 L17.1 11.75 L0 23.5 Z" fill="#c4c4c4"/></svg>
<div style="left:1767.4px;top:809.3px;width:178.4px;height:3px;background:#e3e3e3;"></div>
<svg style="left:1258px;top:846px;" width="18" height="24" viewBox="0 0 18 24"><path d="M0 0 L17.1 11.75 L0 23.5 Z" fill="#c4c4c4"/></svg>
<div style="left:1767.4px;top:869.3px;width:178.4px;height:3px;background:#e3e3e3;"></div>
<svg style="left:1258px;top:906px;" width="18" height="24" viewBox="0 0 18 24"><path d="M0 0 L17.1 11.75 L0 23.5 Z" fill="#c4c4c4"/></svg>
<div style="left:1767.4px;top:929.3px;width:178.4px;height:3px;background:#e3e3e3;"></div>
<svg style="left:1258px;top:966px;" width="18" height="24" viewBox="0 0 18 24"><path d="M0 0 L17.1 11.75 L0 23.5 Z" fill="#c4c4c4"/></svg>
<div style="left:1767.4px;top:989.1px;width:178.4px;height:3px;background:#e3e3e3;"></div>
<svg style="left:1258px;top:1026px;" width="18" height="24" viewBox="0 0 18 24"><path d="M0 0 L17.1 11.75 L0 23.5 Z" fill="#c4c4c4"/></svg>
<div style="left:1767.4px;top:1048.9px;width:178.4px;height:3px;background:#e3e3e3;"></div>
<svg style="left:1258px;top:1086px;" width="18" height="24" viewBox="0 0 18 24"><path d="M0 0 L17.1 11.75 L0 23.5 Z" fill="#c4c4c4"/></svg>
<div style="left:1767.4px;top:1109.0px;width:178.4px;height:3px;background:#e3e3e3;"></div>
<svg style="left:1258px;top:1146px;" width="18" height="24" viewBox="0 0 18 24"><path d="M0 0 L17.1 11.75 L0 23.5 Z" fill="#c4c4c4"/></svg>
<div style="left:1767.4px;top:1168.9px;width:178.4px;height:3px;background:#e3e3e3;"></div>
<svg style="left:1669px;top:1081px;" width="36" height="28" viewBox="0 0 36 28"><rect x="2.7" y="2.8" width="31.3" height="22.6" rx="3" stroke="#c7c7c7" stroke-width="3" fill="none"/><rect x="1.2" y="1.3" width="34.3" height="6.6" rx="2" fill="#c7c7c7"/></svg>
<svg style="left:1669px;top:1141px;" width="36" height="28" viewBox="0 0 36 28"><rect x="2.7" y="2.8" width="31.3" height="22.6" rx="3" stroke="#c7c7c7" stroke-width="3" fill="none"/><rect x="1.2" y="1.3" width="34.3" height="6.6" rx="2" fill="#c7c7c7"/></svg>
<div style="left:1199px;top:1643px;width:1681px;height:6px;background:#636363;"></div>
<div style="left:1196px;top:1649px;width:1684px;height:62px;background:#2a2a2a;"></div>
<div style="left:1199px;top:1711px;width:1681px;height:4px;background:#636363;"></div>
<div style="left:1199px;top:1715px;width:1681px;height:59px;background:#2a2a2a;"></div>
<div style="left:1199px;top:1774px;width:1681px;height:4px;background:#636363;"></div>
<div style="left:1199px;top:1778px;width:1681px;height:26px;background:#282828;"></div>
<div style="left:1974px;top:1715px;width:3px;height:89px;background:#636363;"></div>
<div style="left:2183px;top:1715px;width:3px;height:89px;background:#636363;"></div>
<div style="left:2513px;top:1715px;width:3px;height:89px;background:#636363;"></div>
<div style="left:1184px;top:458px;width:1683px;height:753px;box-sizing:border-box;border:14px solid #ffda2e;border-radius:20px 20px 20px 20px"></div>
<svg style="left:716px;top:191px;" width="48" height="48" viewBox="0 0 48 48"><g fill="#c7c7c7"><rect x="3.0" y="3" width="5" height="5"/><rect x="12.4" y="3" width="5" height="5"/><rect x="21.8" y="3" width="5" height="5"/><rect x="31.2" y="3" width="5" height="5"/><rect x="40.6" y="3" width="5" height="5"/><rect x="3" y="12.4" width="5" height="5"/><rect x="3" y="21.8" width="5" height="5"/><rect x="3" y="31.2" width="5" height="5"/><rect x="3" y="40.6" width="5" height="5"/><rect x="40.5" y="12.4" width="5" height="5"/><rect x="12.4" y="40" width="5" height="5"/></g><path d="M23 45 V23.5 H45" stroke="#c7c7c7" stroke-width="5" fill="none"/><path d="M25 25.5 L43.5 44" stroke="#c7c7c7" stroke-width="5"/></svg>
<svg style="left:796px;top:191px;" width="56" height="48" viewBox="0 0 56 48"><path d="M49 8.3 H14.5 Q12.3 8.3 12.3 10.5 V36" stroke="#c7c7c7" stroke-width="4.8" fill="none"/><rect x="4" y="36" width="24" height="6" fill="#c7c7c7"/><rect x="36" y="17.2" width="14" height="22.5" rx="3" stroke="#c7c7c7" stroke-width="4.4" fill="none"/></svg>
<div style="left:878px;top:191px;width:3px;height:48px;background:#5f5f5f;"></div>
<svg style="left:2526px;top:196px;" width="46" height="38" viewBox="0 0 46 38"><path d="M7 5.5 L19 19 L7 32.5 M25 5.5 L37 19 L25 32.5" stroke="#a9a9a9" stroke-width="3.8" fill="none"/></svg>
<div style="left:2609px;top:191px;width:3px;height:48px;background:#5f5f5f;"></div>
<svg style="left:2642px;top:191px;" width="48" height="48" viewBox="0 0 48 48"><path d="M18.87 9.90 L19.04 4.11 L28.96 4.11 L29.13 9.90 L33.64 12.51 L38.75 9.76 L43.71 18.35 L38.77 21.40 L38.77 26.60 L43.71 29.65 L38.75 38.24 L33.64 35.49 L29.13 38.10 L28.96 43.89 L19.04 43.89 L18.87 38.10 L14.36 35.49 L9.25 38.24 L4.29 29.65 L9.23 26.60 L9.23 21.40 L4.29 18.35 L9.25 9.76 L14.36 12.51 Z" stroke="#c7c7c7" stroke-width="3.4" fill="none" stroke-linejoin="round"/><circle cx="24" cy="24" r="7.6" fill="#c7c7c7"/></svg>
<svg style="left:2740px;top:192px;" width="20" height="46" viewBox="0 0 20 46"><circle cx="10" cy="9.6" r="4.8" fill="#c7c7c7"/><circle cx="10" cy="23" r="4.8" fill="#c7c7c7"/><circle cx="10" cy="36.4" r="4.8" fill="#c7c7c7"/></svg>
<svg style="left:2808px;top:195px;" width="40" height="40" viewBox="0 0 40 40"><path d="M6 6 L34 34 M34 6 L6 34" stroke="#c7c7c7" stroke-width="3.8"/></svg>
<svg style="left:712px;top:268px;" width="56" height="56" viewBox="0 0 56 56"><circle cx="27.8" cy="27.8" r="20.3" stroke="#c7c7c7" stroke-width="4.2" fill="none"/><circle cx="27.8" cy="27.8" r="12.2" fill="#c7c7c7"/></svg>
<svg style="left:796px;top:268px;" width="56" height="56" viewBox="0 0 56 56"><circle cx="28" cy="27.8" r="20.3" stroke="#c7c7c7" stroke-width="4.2" fill="none"/><path d="M42 13.8 L14 41.8" stroke="#c7c7c7" stroke-width="4.2"/></svg>
<div style="left:878px;top:272px;width:3px;height:48px;background:#5f5f5f;"></div>
<svg style="left:912px;top:270px;" width="46" height="48" viewBox="0 0 46 48"><path d="M23 35 V7" stroke="#c7c7c7" stroke-width="4.6"/><path d="M11.5 18.6 L23 7 L34.5 18.6" stroke="#c7c7c7" stroke-width="4.6" fill="none"/><path d="M7.2 34.8 V38.4 Q7.2 41.7 10.5 41.7 H35.5 Q38.8 41.7 38.8 38.4 V34.8" stroke="#c7c7c7" stroke-width="4.2" fill="none"/></svg>
<svg style="left:996px;top:270px;" width="46" height="48" viewBox="0 0 46 48"><path d="M23 5 V33" stroke="#c7c7c7" stroke-width="4.6"/><path d="M11.5 21.5 L23 33 L34.5 21.5" stroke="#c7c7c7" stroke-width="4.6" fill="none"/><path d="M7.2 34.8 V38.4 Q7.2 41.7 10.5 41.7 H35.5 Q38.8 41.7 38.8 38.4 V34.8" stroke="#c7c7c7" stroke-width="4.2" fill="none"/></svg>
<div style="left:1073px;top:272px;width:3px;height:48px;background:#5f5f5f;"></div>
<svg style="left:1106px;top:270px;" width="48" height="48" viewBox="0 0 48 48"><g transform="translate(24 24) scale(0.9) translate(-24 -24)"><path d="M19 25 V10.5 A5 5 0 0 1 29 10.5 V25" stroke="#c7c7c7" stroke-width="4.4" fill="none"/><path d="M8.5 27 H39.5 Q42.5 27 42.5 30 V34.5 L45 43.5 Q45.5 46 43 46 H5 Q2.5 46 3 43.5 L5.5 34.5 V30 Q5.5 27 8.5 27 Z" stroke="#c7c7c7" stroke-width="4.2" fill="none"/><path d="M5.5 34 H42.5" stroke="#c7c7c7" stroke-width="3.8"/><path d="M14.5 46 V38 M24 46 V38 M33.5 46 V38" stroke="#c7c7c7" stroke-width="4.2"/></g></svg>
<svg style="left:1446px;top:286px;" width="24" height="17" viewBox="0 0 24 17"><path d="M0 0 H24 L12 17 Z" fill="#c7c7c7"/></svg>
<div style="left:1506px;top:266px;width:360px;height:60px;background:#3c3c3c;border-radius:30px"></div>
<svg style="left:1536px;top:278px;" width="36" height="36" viewBox="0 0 36 36"><path d="M4.5 4.8 H31 L17.8 19 Z" stroke="#c7c7c7" stroke-width="3.4" fill="none" stroke-linejoin="miter"/><rect x="15.3" y="17" width="5.6" height="15.5" fill="#c7c7c7"/></svg>
<svg style="left:2614px;top:286px;" width="24" height="17" viewBox="0 0 24 17"><path d="M0 0 H24 L12 17 Z" fill="#c7c7c7"/></svg>
<svg style="left:2795px;top:365px;" width="24" height="16" viewBox="0 0 24 16"><path d="M0 0 H24 L12 16 Z" fill="#c7c7c7"/></svg>
<svg style="left:736px;top:539px;" width="44" height="54" viewBox="0 0 44 54"><path d="M4.5 7 Q4.5 4.5 7 4.5 H26 L39.5 18 V47 Q39.5 49.5 37 49.5 H7 Q4.5 49.5 4.5 47 Z" stroke="#c7c7c7" stroke-width="5" fill="none" stroke-linejoin="round"/><path d="M24.4 4.5 L39.5 19.6 H24.4 Z" fill="#c7c7c7"/><circle cx="15.6" cy="26.9" r="3.9" fill="#c7c7c7"/><circle cx="28.3" cy="39.4" r="3.9" fill="#c7c7c7"/><path d="M14 42.2 L30 26.2" stroke="#c7c7c7" stroke-width="5.2"/></svg>
<svg style="left:2826px;top:1670px;" width="30" height="26" viewBox="0 0 30 26"><path d="M1 3 H28 M1 12.5 H28 M1 22 H28" stroke="#9a9a9a" stroke-width="2.6"/></svg>
<svg style="left:2138px;top:1737px;" width="24" height="16" viewBox="0 0 24 16"><path d="M0 16 H24 L12 0 Z" fill="#c7c7c7"/></svg>
<div style="left:49.67px;top:219.95px;font-family:'Liberation Sans', sans-serif;font-size:41px;line-height:41px;white-space:pre;color:#ececec;transform:scaleX(0.9759);transform-origin:0 0;">Increment A</div>
<div style="left:311.87px;top:219.95px;font-family:'Liberation Sans', sans-serif;font-size:41px;line-height:41px;white-space:pre;color:#ececec;transform:scaleX(0.9778);transform-origin:0 0;">Increment B</div>
<div style="left:49.67px;top:291.95px;font-family:'Liberation Sans', sans-serif;font-size:41px;line-height:41px;white-space:pre;color:#ececec;transform:scaleX(0.9780);transform-origin:0 0;">Increment Both</div>
<div style="left:27.10px;top:404.65px;font-family:'Liberation Sans', sans-serif;font-size:49px;line-height:49px;white-space:pre;color:#ececec;transform:scaleX(0.9610);transform-origin:0 0;">A: 5, B: 5</div>
<div style="left:172.53px;top:754.20px;font-family:'Liberation Sans', sans-serif;font-size:46px;line-height:46px;white-space:pre;color:#000;transform:scaleX(0.9246);transform-origin:0 0;">No manual memoization</div>
<div style="left:251.50px;top:29.05px;font-family:'Liberation Sans', sans-serif;font-size:25px;line-height:25px;white-space:pre;color:#e3e3e3;transform:scaleX(0.9872);transform-origin:0 0;-webkit-text-stroke-width:0.5px;">Vite + React + TS</div>
<div style="left:315.67px;top:114.50px;font-family:'Liberation Sans', sans-serif;font-size:28px;line-height:28px;white-space:pre;color:#e3e3e3;transform:scaleX(1.0646);transform-origin:0 0;">localhost:4173</div>
<div style="left:932.55px;top:196.85px;font-family:'Liberation Sans', sans-serif;font-size:37px;line-height:37px;white-space:pre;color:#c7c7c7;transform:scaleX(1.0167);transform-origin:0 0;">Elements</div>
<div style="left:1160.55px;top:196.85px;font-family:'Liberation Sans', sans-serif;font-size:37px;line-height:37px;white-space:pre;color:#c7c7c7;transform:scaleX(1.0256);transform-origin:0 0;">Console</div>
<div style="left:1370.96px;top:196.85px;font-family:'Liberation Sans', sans-serif;font-size:37px;line-height:37px;white-space:pre;color:#c7c7c7;transform:scaleX(1.0211);transform-origin:0 0;">Sources</div>
<div style="left:1580.25px;top:196.85px;font-family:'Liberation Sans', sans-serif;font-size:37px;line-height:37px;white-space:pre;color:#c7c7c7;transform:scaleX(1.0504);transform-origin:0 0;">Network</div>
<div style="left:1792.88px;top:196.85px;font-family:'Liberation Sans', sans-serif;font-size:37px;line-height:37px;white-space:pre;color:#c7c7c7;transform:scaleX(1.0389);transform-origin:0 0;">Performance</div>
<div style="left:2080.48px;top:196.85px;font-family:'Liberation Sans', sans-serif;font-size:37px;line-height:37px;white-space:pre;color:#87b2f7;transform:scaleX(1.0397);transform-origin:0 0;">Memory</div>
<div style="left:2293.80px;top:196.85px;font-family:'Liberation Sans', sans-serif;font-size:37px;line-height:37px;white-space:pre;color:#c7c7c7;transform:scaleX(1.0536);transform-origin:0 0;">Application</div>
<div style="left:1219.59px;top:278.55px;font-family:'Liberation Sans', sans-serif;font-size:37px;line-height:37px;white-space:pre;color:#cdcdcd;transform:scaleX(1.0058);transform-origin:0 0;">Summary</div>
<div style="left:1588.38px;top:278.35px;font-family:'Liberation Sans', sans-serif;font-size:37px;line-height:37px;white-space:pre;color:#c7c7c7;transform:scaleX(1.0392);transform-origin:0 0;">Filter by class</div>
<div style="left:1894.40px;top:278.35px;font-family:'Liberation Sans', sans-serif;font-size:37px;line-height:37px;white-space:pre;color:#e3e3e3;transform:scaleX(1.0399);transform-origin:0 0;">All objects</div>
<div style="left:723.47px;top:376.85px;font-family:'Liberation Sans', sans-serif;font-size:37px;line-height:37px;white-space:pre;color:#e3e3e3;transform:scaleX(1.0425);transform-origin:0 0;">Profiles</div>
<div style="left:721.42px;top:462.55px;font-family:'Liberation Sans', sans-serif;font-size:37px;line-height:37px;white-space:pre;color:#8e8e8e;transform:scaleX(0.9602);transform-origin:0 0;">HEAP SNAPSHOTS</div>
<div style="left:796.40px;top:526.05px;font-family:'Liberation Sans', sans-serif;font-size:37px;line-height:37px;white-space:pre;color:#d6d6d6;">Snapshot 1</div>
<div style="left:796.32px;top:566.35px;font-family:'Liberation Sans', sans-serif;font-size:29px;line-height:29px;white-space:pre;color:#d6d6d6;transform:scaleX(1.0392);transform-origin:0 0;">123 MB</div>
<div style="left:1210.28px;top:352.65px;font-family:'Liberation Sans', sans-serif;font-size:37px;line-height:37px;white-space:pre;color:#e3e3e3;transform:scaleX(1.0608);transform-origin:0 0;">Constructor</div>
<div style="left:1989.17px;top:352.65px;font-family:'Liberation Sans', sans-serif;font-size:37px;line-height:37px;white-space:pre;color:#e3e3e3;transform:scaleX(1.0421);transform-origin:0 0;">Distance</div>
<div style="left:2193.99px;top:352.65px;font-family:'Liberation Sans', sans-serif;font-size:37px;line-height:37px;white-space:pre;color:#e3e3e3;transform:scaleX(1.0062);transform-origin:0 0;">Shallow Size</div>
<div style="left:2523.47px;top:352.65px;font-family:'Liberation Sans', sans-serif;font-size:37px;line-height:37px;white-space:pre;color:#e3e3e3;transform:scaleX(1.0084);transform-origin:0 0;">Retained Size</div>
<div style="left:1206.80px;top:1661.25px;font-family:'Liberation Sans', sans-serif;font-size:37px;line-height:37px;white-space:pre;color:#e3e3e3;">Retainers</div>
<div style="left:1211.40px;top:1726.35px;font-family:'Liberation Sans', sans-serif;font-size:37px;line-height:37px;white-space:pre;color:#e3e3e3;">Object</div>
<div style="left:1986.60px;top:1726.35px;font-family:'Liberation Sans', sans-serif;font-size:37px;line-height:37px;white-space:pre;color:#e3e3e3;">Distance</div>
<div style="left:2197.00px;top:1726.35px;font-family:'Liberation Sans', sans-serif;font-size:37px;line-height:37px;white-space:pre;color:#e3e3e3;">Shallow Size</div>
<div style="left:2526.00px;top:1726.35px;font-family:'Liberation Sans', sans-serif;font-size:37px;line-height:37px;white-space:pre;color:#e3e3e3;">Retained Size</div>
</div>
</div></body></html>
